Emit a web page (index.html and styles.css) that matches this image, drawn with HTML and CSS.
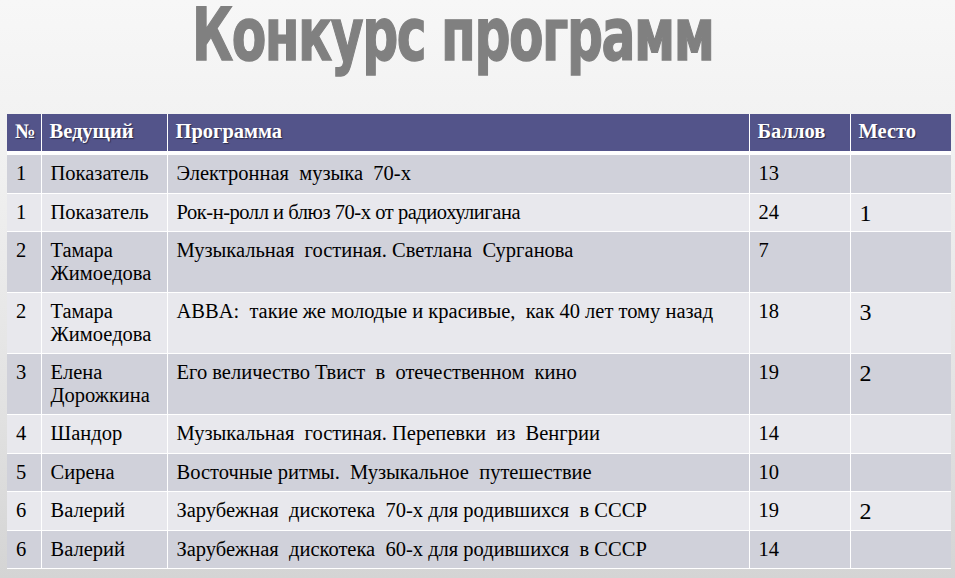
FILE: index.html
```html
<!DOCTYPE html>
<html lang="ru">
<head>
<meta charset="utf-8">
<title>Конкурс программ</title>
<link rel="stylesheet" href="styles.css">
</head>
<body>
<div class="slide">
  <header class="title-area">
    <h1 class="title">Конкурс программ</h1>
  </header>
  <table class="grid">
    <colgroup>
      <col class="c-num"><col class="c-host"><col class="c-prog"><col class="c-score"><col class="c-place">
    </colgroup>
    <thead>
      <tr><th>№</th><th>Ведущий</th><th>Программа</th><th>Баллов</th><th>Место</th></tr>
    </thead>
    <tbody>
      <tr><td>1</td><td>Показатель</td><td>Электронная&nbsp; музыка&nbsp; 70-х</td><td>13</td><td class="place"></td></tr>
      <tr><td>1</td><td>Показатель</td><td class="tight">Рок-н-ролл и блюз 70-х от радиохулигана</td><td>24</td><td class="place">1</td></tr>
      <tr><td>2</td><td>Тамара Жимоедова</td><td>Музыкальная&nbsp; гостиная. Светлана&nbsp; Сурганова</td><td>7</td><td class="place"></td></tr>
      <tr><td>2</td><td>Тамара Жимоедова</td><td>ABBA:&nbsp; такие же молодые и красивые,&nbsp; как 40 лет тому назад</td><td>18</td><td class="place">3</td></tr>
      <tr><td>3</td><td>Елена Дорожкина</td><td>Его величество Твист&nbsp; в&nbsp; отечественном&nbsp; кино</td><td>19</td><td class="place">2</td></tr>
      <tr><td>4</td><td>Шандор</td><td>Музыкальная&nbsp; гостиная. Перепевки&nbsp; из&nbsp; Венгрии</td><td>14</td><td class="place"></td></tr>
      <tr><td>5</td><td>Сирена</td><td>Восточные ритмы.&nbsp; Музыкальное&nbsp; путешествие</td><td>10</td><td class="place"></td></tr>
      <tr><td>6</td><td>Валерий</td><td>Зарубежная&nbsp; дискотека&nbsp; 70-х для родившихся&nbsp; в СССР</td><td>19</td><td class="place">2</td></tr>
      <tr><td>6</td><td>Валерий</td><td>Зарубежная&nbsp; дискотека&nbsp; 60-х для родившихся&nbsp; в СССР</td><td>14</td><td class="place"></td></tr>
    </tbody>
  </table>
</div>
</body>
</html>
```

FILE: styles.css
```css
html, body {
  margin: 0;
  padding: 0;
}
body {
  width: 955px;
  height: 578px;
  overflow: hidden;
  background: linear-gradient(180deg, #f7f7f7 0%, #f0f0f0 30%, #e2e2e2 70%, #d4d4d4 100%);
  font-family: "Liberation Serif", "Times New Roman", serif;
}
.slide {
  display: flex;
  flex-direction: column;
  padding: 0 4px 0 7px;
}
.title-area {
  height: 114px;
  display: flex;
  align-items: flex-start;
  padding-left: 185px;
}
.title {
  margin: 0;
  font-family: "DejaVu Sans", sans-serif;
  font-weight: bold;
  font-stretch: condensed;
  font-size: 56px;
  line-height: 60px;
  color: #808080;
  letter-spacing: -1.5px;
  -webkit-text-stroke: 1px #808080;
  transform-origin: 0 0;
  transform: scale(1, 1.3);
  margin-top: -4px;
  white-space: nowrap;
}
.grid {
  width: 944px;
  border-collapse: collapse;
  table-layout: fixed;
  font-size: 20.5px;
  line-height: 22.5px;
  color: #000;
}
.c-num { width: 34px; }
.c-host { width: 126px; }
.c-prog { width: 582px; }
.c-score { width: 101px; }
.c-place { width: 101px; }
.grid th, .grid td {
  border: 1px solid #fff;
  padding: 7px 4px 8px 9px;
  text-align: left;
  vertical-align: top;
  font-weight: normal;
}
.grid th {
  background: #53548a;
  color: #fff;
  font-weight: bold;
  text-shadow: 1px 1px 1px #2a2a4a;
  border-bottom: 4px solid #fff;
  border-top: none;
  padding: 6px 2px 8.5px 8px;
}
.grid th:first-child, .grid td:first-child { border-left: none; }
.grid th:last-child, .grid td:last-child { border-right: none; }
.grid tbody tr:nth-child(odd) td { background: #d0d1da; }
.grid tbody tr:nth-child(even) td { background: #e8e8ed; }
.grid td.tight {
  letter-spacing: -0.45px;
}
.grid td.place {
  font-size: 24px;
  padding-top: 8px;
  padding-bottom: 7px;
}
```
